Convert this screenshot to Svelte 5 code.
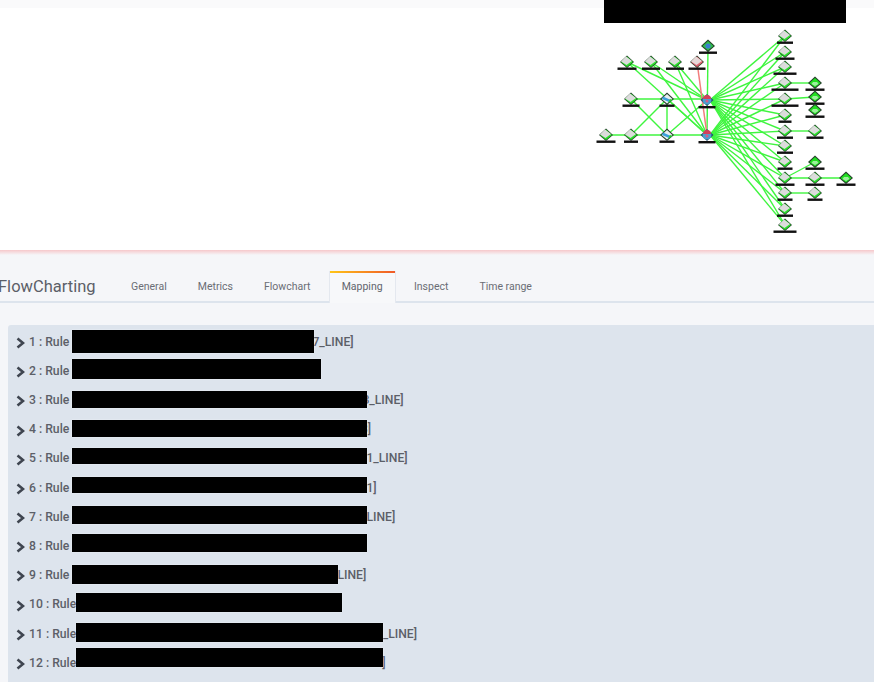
<script lang="ts">
	type Node = { x: number; y: number; w: number; kind?: string }

	const tabs = ['General', 'Metrics', 'Flowchart', 'Mapping', 'Inspect', 'Time range']

	// top / h / w are the black-out block on each row, shift pulls the tail text under it
	const rules = [
		{ n: 1, top: 3.6, h: 23, w: 242, end: '7_LINE]', shift: -1.5 },
		{ n: 2, top: 3.4, h: 20, w: 249, end: '', shift: 0 },
		{ n: 3, top: 6.2, h: 17, w: 295, end: '3_LINE]', shift: -4.5 },
		{ n: 4, top: 6, h: 17, w: 295, end: '3]', shift: -6 },
		{ n: 5, top: 4.8, h: 16, w: 295, end: '1_LINE]', shift: -0.5 },
		{ n: 6, top: 4.6, h: 16, w: 295, end: '1]', shift: -0.5 },
		{ n: 7, top: 4.4, h: 18, w: 295, end: 'LINE]', shift: -0.5 },
		{ n: 8, top: 3.7, h: 18, w: 295, end: '', shift: 0 },
		{ n: 9, top: 5, h: 19, w: 266, end: 'LINE]', shift: -0.5 },
		{ n: 10, top: 3.8, h: 19, w: 266, end: '', shift: 0 },
		{ n: 11, top: 4.6, h: 19, w: 307, end: '_LINE]', shift: -0.5 },
		{ n: 12, top: 0.4, h: 19, w: 307, end: ']', shift: -1 },
	]

	const nodes: Node[] = [
		{ x: 627, y: 62, w: 19 }, { x: 651, y: 62, w: 18 }, { x: 675, y: 62, w: 18 },
		{ x: 697, y: 62, w: 17, kind: 'red' }, { x: 708, y: 46, w: 18, kind: 'blue' },
		{ x: 631, y: 99, w: 17 }, { x: 667, y: 99, w: 15, kind: 'split' },
		{ x: 606, y: 135, w: 19 }, { x: 631, y: 135, w: 14 }, { x: 667, y: 135, w: 15, kind: 'split' },
		{ x: 785, y: 36, w: 16 }, { x: 785, y: 52, w: 19 }, { x: 785, y: 67, w: 23 },
		{ x: 785, y: 83, w: 27 }, { x: 785, y: 99, w: 27 }, { x: 785, y: 115, w: 13 },
		{ x: 785, y: 131, w: 16 }, { x: 785, y: 146, w: 16 }, { x: 785, y: 162, w: 15 },
		{ x: 785, y: 178, w: 19 }, { x: 785, y: 193, w: 15 }, { x: 785, y: 209, w: 16 }, { x: 785, y: 225, w: 23 },
		{ x: 815, y: 83, w: 19, kind: 'ok' }, { x: 815, y: 97, w: 19, kind: 'ok' }, { x: 815, y: 110, w: 19, kind: 'ok' },
		{ x: 815, y: 131, w: 17 }, { x: 815, y: 162, w: 19, kind: 'ok' }, { x: 815, y: 178, w: 19 },
		{ x: 846, y: 178, w: 19, kind: 'ok' }, { x: 815, y: 193, w: 15 },
	]

	const hubs = [[707, 100], [707, 135]]
	const right = nodes.filter((n) => n.x === 785)
	const links = [
		[631, 99, 707, 99], [606, 135, 707, 135], [708, 46, 707, 135], [667, 99, 667, 135],
		[631, 135, 667, 99], [627, 62, 707, 135], [651, 62, 707, 100], [675, 62, 707, 135],
		[627, 62, 707, 100], [651, 62, 707, 135], [675, 62, 707, 100], [631, 99, 667, 135],
		[667, 99, 707, 135], [667, 135, 707, 100],
		[785, 83, 815, 83], [785, 99, 815, 97], [785, 131, 815, 131], [785, 178, 815, 162],
		[785, 178, 846, 178], [785, 193, 815, 193],
	]
</script>

<div class="page">
	<section class="graph">
		<div class="topstrip"></div>
		<div class="title-block"></div>
		<svg class="diagram" width="874" height="250" viewBox="0 0 874 250">
			{#each links as l}
				<line x1={l[0]} y1={l[1]} x2={l[2]} y2={l[3]} class="link" />
			{/each}
			{#each hubs as h}
				{#each right as r}
					<line x1={h[0] + 3} y1={h[1]} x2={r.x} y2={r.y} class="link" />
				{/each}
			{/each}
			<line x1="697" y1="62" x2="707" y2="135" class="alert" />
			{#each nodes as n}
				<g transform="translate({n.x} {n.y})">
					<path d="M0-6.5L7 0L0 6L-7 0Z" fill="#24402a" />
					{#if n.kind === 'ok'}
						<path d="M0-5L5.5 0L0 4.5L-5.5 0Z" fill="#22e022" />
						<path d="M-2-1L2-1L3.5 1L0 3L-3.5 1Z" fill="#9cf09c" />
					{:else if n.kind === 'blue'}
						<path d="M0-5L5.5 0L0 4.5L-5.5 0Z" fill="#2fbf4a" />
						<circle r="2.6" fill="#3a7fd0" />
					{:else if n.kind === 'split'}
						<path d="M0-5L5.5 0L0 4.5L-5.5 0Z" fill="#e8eef0" />
						<path d="M-4-2.5L5 1.5L2 3L-5 0Z" fill="#3b9fdc" />
						<path d="M1 4L5.5 1L3 0Z" fill="#22d022" />
					{:else}
						<path d="M0-5.5L6 0L0 5L-6 0Z" fill={n.kind === 'red' ? '#e06070' : '#2be02b'} />
						<path d="M-1-5.5L5 -1L-0.5 3L-6 -0.5Z" fill={n.kind === 'red' ? '#e8d8d8' : '#dcdcdc'} />
					{/if}
					<rect x={-n.w / 2} y="5.5" width={n.w} height="2.4" fill="#111" />
				</g>
			{/each}
			{#each hubs as h}
				<g transform="translate({h[0]} {h[1]})">
					<path d="M0-6L6.5 0L0 6L-6.5 0Z" fill="#24506a" />
					<circle r="4.5" fill="#4aa0d0" />
					<path d="M-4-1A4 4 0 0 1 4-1Z" fill="#d2405a" />
					<circle r="1.5" cy="1" fill="#d2608a" />
					<rect x="-8.5" y="6" width="17" height="2.4" fill="#111" />
				</g>
			{/each}
		</svg>
	</section>

	<section class="editor">
		<div class="glow"></div>
		<header class="tabbar">
			<h2>FlowCharting</h2>
			<nav>
				{#each tabs as t}
					<span class="tab" class:active={t === 'Mapping'}>{t}</span>
				{/each}
			</nav>
		</header>

		<div class="rules">
			{#each rules as r}
				<div class="rule">
					<svg class="chev" width="9" height="12" viewBox="0 0 9 12">
						<path d="M1.5 1.5L7 6L1.5 10.5" fill="none" stroke="#3f4550" stroke-width="2.6" />
					</svg>
					<span class="label">{r.n} : Rule</span>
					<span class="mask" class:wide={r.n > 9} style="width:{r.w}px;height:{r.h}px;margin-top:{r.top}px"></span>
					<span class="tail" style="margin-left:{r.shift}px">{r.end}</span>
				</div>
			{/each}
		</div>
	</section>
</div>

<style>
	:global(body) {
		margin: 0;
		background: #fff;
	}
	.page {
		width: 874px;
		height: 682px;
		overflow: hidden;
		font-family: Roboto, "Liberation Sans", sans-serif;
		color: #5c5f68;
	}
	.graph {
		position: relative;
		height: 250px;
		background: #fff;
	}
	.topstrip {
		height: 8px;
		background: #fafafb;
	}
	.title-block {
		position: absolute;
		left: 604px;
		top: 0;
		width: 242px;
		height: 23px;
		background: #000;
	}
	.diagram {
		position: absolute;
		left: 0;
		top: 0;
		filter: blur(0.35px);
	}
	.link {
		stroke: #3ff53f;
		stroke-width: 1.4;
	}
	.alert {
		stroke: #f27c7c;
		stroke-width: 1.5;
	}
	.editor {
		height: 432px;
		background: #f5f6f9;
	}
	.glow {
		height: 5px;
		background: linear-gradient(#f6c8cb, #f5f6f9);
	}
	.tabbar {
		display: flex;
		align-items: flex-end;
		height: 48px;
		border-bottom: 2px solid #dde4ed;
		box-sizing: border-box;
	}
	h2 {
		margin: 0 0 2px -2px;
		width: 117.5px;
		font-size: 16.5px;
		line-height: 24px;
		font-weight: 400;
		white-space: nowrap;
	}
	nav {
		display: flex;
		font-size: 10.5px;
		margin-bottom: -2px;
	}
	.tab {
		display: flex;
		align-items: center;
		height: 32px;
		box-sizing: border-box;
		padding: 0 15.5px 1px;
		color: #6a6d75;
	}
	.tab.active {
		margin: 0 3.8px;
		padding: 0 12px 1px;
		color: #62656d;
		background: #f7f8fa;
		position: relative;
		box-shadow: 1px 0 0 #e4e8ef, -1px 0 0 #e4e8ef;
	}
	.tab.active::before {
		content: '';
		position: absolute;
		left: 0;
		right: 0;
		top: 0;
		height: 2px;
		background: linear-gradient(90deg, #ffc517, #f05a28);
	}
	.rules {
		margin: 22px 0 0 8px;
		background: #dde4ed;
		border-radius: 3px 0 0 0;
		padding-top: 1.4px;
		height: 360px;
	}
	.rule {
		display: flex;
		align-items: center;
		height: 29.2px;
		padding-left: 8px;
		font-size: 12.2px;
		font-weight: 500;
		color: #5c5f68;
	}
	.label,
	.tail {
		padding-top: 1.5px;
	}
	.chev {
		margin: 4px 4px 0 0;
	}
	.mask {
		position: relative;
		z-index: 1;
		align-self: flex-start;
		background: #000;
		margin-left: 2.6px;
		box-shadow: 0 0 1px #fff;
	}
	.mask.wide {
		margin-left: 0;
	}
</style>
